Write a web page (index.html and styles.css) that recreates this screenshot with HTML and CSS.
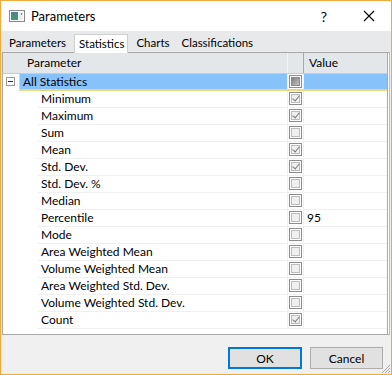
FILE: index.html
```html
<!DOCTYPE html>
<html>
<head>
<meta charset="utf-8">
<link rel="stylesheet" href="styles.css">
</head>
<body>
<div class="window">
  <div class="titlebar">
    <svg class="appicon" width="16" height="12" viewBox="0 0 16 12">
      <defs>
        <linearGradient id="g1" x1="0" y1="0" x2="0" y2="1">
          <stop offset="0" stop-color="#4f7f9a"/>
          <stop offset="1" stop-color="#3fa06a"/>
        </linearGradient>
      </defs>
      <rect x="0.5" y="0.5" width="15" height="11" fill="#fff" stroke="#8a8a8a"/>
      <rect x="2" y="2" width="7" height="8" fill="url(#g1)"/>
      <rect x="10" y="2" width="4" height="8" fill="#e8eef0"/>
      <rect x="12" y="3" width="1" height="2" fill="#4a90b0"/>
    </svg>
    <span class="title">Parameters</span>
    <span class="help">?</span>
    <svg class="close" width="12" height="12" viewBox="0 0 12 12">
      <path d="M1 1 L11 11 M11 1 L1 11" stroke="#000" stroke-width="1.1" fill="none"/>
    </svg>
  </div>
  <div class="client">
    <div class="tabs">
      <span class="tab">Parameters</span>
      <span class="tab selected">Statistics</span>
      <span class="tab">Charts</span>
      <span class="tab">Classifications</span>
    </div>
    <div class="page">
      <div class="grid">
        <div class="hdr">
          <span class="h-name">Parameter</span>
          <span class="h-check"></span>
          <span class="h-value">Value</span>
        </div>
        <div class="row root">
          <span class="tree"><span class="expander"></span></span>
          <span class="name sel">All Statistics</span>
          <span class="check"><span class="cb ind"><span class="inner"></span></span></span>
          <span class="value sel"></span>
        </div>
        <div class="row"><span class="indent"></span><span class="name">Minimum</span><span class="check"><span class="cb on"><span class="inner"></span></span></span><span class="value"></span></div>
        <div class="row"><span class="indent"></span><span class="name">Maximum</span><span class="check"><span class="cb on"><span class="inner"></span></span></span><span class="value"></span></div>
        <div class="row"><span class="indent"></span><span class="name">Sum</span><span class="check"><span class="cb"><span class="inner"></span></span></span><span class="value"></span></div>
        <div class="row"><span class="indent"></span><span class="name">Mean</span><span class="check"><span class="cb on"><span class="inner"></span></span></span><span class="value"></span></div>
        <div class="row"><span class="indent"></span><span class="name">Std. Dev.</span><span class="check"><span class="cb on"><span class="inner"></span></span></span><span class="value"></span></div>
        <div class="row"><span class="indent"></span><span class="name">Std. Dev. %</span><span class="check"><span class="cb"><span class="inner"></span></span></span><span class="value"></span></div>
        <div class="row"><span class="indent"></span><span class="name">Median</span><span class="check"><span class="cb"><span class="inner"></span></span></span><span class="value"></span></div>
        <div class="row"><span class="indent"></span><span class="name">Percentile</span><span class="check"><span class="cb"><span class="inner"></span></span></span><span class="value">95</span></div>
        <div class="row"><span class="indent"></span><span class="name">Mode</span><span class="check"><span class="cb"><span class="inner"></span></span></span><span class="value"></span></div>
        <div class="row"><span class="indent"></span><span class="name">Area Weighted Mean</span><span class="check"><span class="cb"><span class="inner"></span></span></span><span class="value"></span></div>
        <div class="row"><span class="indent"></span><span class="name">Volume Weighted Mean</span><span class="check"><span class="cb"><span class="inner"></span></span></span><span class="value"></span></div>
        <div class="row"><span class="indent"></span><span class="name">Area Weighted Std. Dev.</span><span class="check"><span class="cb"><span class="inner"></span></span></span><span class="value"></span></div>
        <div class="row"><span class="indent"></span><span class="name">Volume Weighted Std. Dev.</span><span class="check"><span class="cb"><span class="inner"></span></span></span><span class="value"></span></div>
        <div class="row"><span class="indent"></span><span class="name">Count</span><span class="check"><span class="cb on"><span class="inner"></span></span></span><span class="value"></span></div>
      </div>
    </div>
    <div class="footer">
      <button class="btn default">OK</button>
      <button class="btn">Cancel</button>
      <svg class="grip" width="10" height="10" viewBox="0 0 10 10">
        <path d="M9 1 L1 9 M9 4 L4 9 M9 7 L7 9" stroke="#a8a8a8" stroke-width="1" fill="none"/>
      </svg>
    </div>
  </div>
</div>
</body>
</html>
```
FILE: styles.css
```css
html, body {
  margin: 0;
  padding: 0;
  background: #ffffff;
}
body {
  width: 392px;
  height: 375px;
  overflow: hidden;
  font-family: "Lato", "Liberation Sans", sans-serif;
  font-size: 12px;
  color: #000;
}
.window {
  box-sizing: border-box;
  width: 392px;
  height: 375px;
  border: 1px solid #eeaa3a;
  display: flex;
  flex-direction: column;
}
.titlebar {
  height: 30px;
  background: #fff;
  display: flex;
  align-items: center;
  position: relative;
}
.appicon {
  margin-left: 8px;
}
.title {
  margin-left: 6px;
  font-size: 13px;
}
.help {
  margin-left: auto;
  font-size: 14px;
  margin-right: 36px;
}
.close {
  margin-right: 16px;
}
.client {
  flex: 1;
  background: #f0f0f0;
  display: flex;
  flex-direction: column;
}
.tabs {
  height: 21px;
  display: flex;
  align-items: flex-end;
  padding-left: 4px;
  background: #e8e9eb;
  font-size: 11.5px;
}
.tab {
  height: 18px;
  line-height: 17px;
  padding: 0 4px;
  box-sizing: border-box;
  margin-left: 4px;
}
.tab:first-child {
  margin-left: 0;
}
.tab.selected {
  background: #fff;
  border: 1px solid #d0d0d0;
  border-bottom: none;
  height: 19px;
  margin-bottom: -1px;
  padding: 0 3px 0 4px;
  position: relative;
  z-index: 1;
}
.page {
  margin: 0 1px 0 1px;
  border: 1px solid #a9a9a9;
  border-right-color: #b8bccb;
  background: #fff;
  height: 283px;
  box-sizing: border-box;
  padding-right: 1px;
}
.grid {
  border-right: 1px solid #a5a9b8;
  height: 100%;
}
.hdr {
  height: 21px;
  display: flex;
  background: #e4e7ea;
  border-bottom: 1px solid #c9cbcf;
  box-sizing: border-box;
  align-items: stretch;
}
.h-name {
  flex: 1;
  padding-left: 24px;
  line-height: 20px;
  border-right: 1px solid #f4f4f4;
}
.h-check {
  width: 15px;
  border-right: 1px solid #a9a9a9;
}
.h-value {
  width: 78px;
  padding-left: 5px;
  line-height: 20px;
}
.row {
  height: 17px;
  display: flex;
}
.row.root {
  border-bottom: 2px solid #f2d67e;
  height: 17px;
  box-sizing: border-box;
  margin-left: 16px;
}
.tree {
  width: 16px;
  margin-left: -16px;
  background: #fff;
  display: flex;
  align-items: center;
  justify-content: center;
}
.expander {
  width: 7px;
  height: 7px;
  border: 1px solid #999;
  position: relative;
  margin-left: -2px;
}
.expander::after {
  content: "";
  position: absolute;
  left: 1px;
  top: 3px;
  width: 5px;
  height: 1px;
  background: #333;
}
.name {
  flex: 1;
  line-height: 16px;
  padding-left: 3px;
  border-bottom: 1px solid #f0f0f0;
  white-space: nowrap;
}
.name.sel {
  background: #88c2fb;
  border-bottom: none;
  border-left: 1px solid #f2d67e;
  padding-left: 3px;
}
.indent {
  width: 35px;
}
.check {
  border-left: 1px solid #f0f0f0;
  border-right: 1px solid #f0f0f0;
  border-bottom: 1px solid #f0f0f0;
  display: flex;
  align-items: flex-start;
  justify-content: center;
  padding-top: 1px;
  box-sizing: border-box;
  width: 17px;
}
.root .check {
  border-bottom: none;
  background: #fff;
}
.value {
  width: 83px;
  line-height: 16px;
  padding-left: 3px;
  box-sizing: border-box;
  border-bottom: 1px solid #f0f0f0;
}
.value.sel {
  background: #88c2fb;
  border-bottom: none;
}
.cb {
  width: 13px;
  height: 13px;
  box-sizing: border-box;
  border: 1px solid #8d8d8d;
  background: #fff;
  padding: 1px;
  display: block;
}
.cb .inner {
  display: block;
  width: 9px;
  height: 9px;
  box-sizing: border-box;
  border: 1px solid #bdbdbd;
  background: #efefef;
  position: relative;
}
.cb.on .inner::after {
  content: "";
  position: absolute;
  left: 2px;
  top: -1px;
  width: 3px;
  height: 6px;
  border-right: 1.5px solid #7d7d7d;
  border-bottom: 1.5px solid #7d7d7d;
  transform: rotate(40deg);
}
.cb.ind .inner {
  background: linear-gradient(135deg, #7f7f7f, #c2c2c2);
  border-color: #8a8a8a;
}
.footer {
  flex: 1;
  display: flex;
  justify-content: flex-end;
  align-items: flex-start;
  padding-top: 12px;
  padding-right: 8px;
  gap: 8px;
  position: relative;
}
.btn {
  font-family: "Lato", "Liberation Sans", sans-serif;
  font-size: 12px;
  width: 73px;
  height: 22px;
  background: #e1e1e1;
  border: 1px solid #adadad;
  padding: 0;
  margin: 0;
  color: #000;
}
.btn.default {
  border: 2px solid #0078d7;
  width: 74px;
}
.grip {
  position: absolute;
  right: 0;
  bottom: 0;
}
```
